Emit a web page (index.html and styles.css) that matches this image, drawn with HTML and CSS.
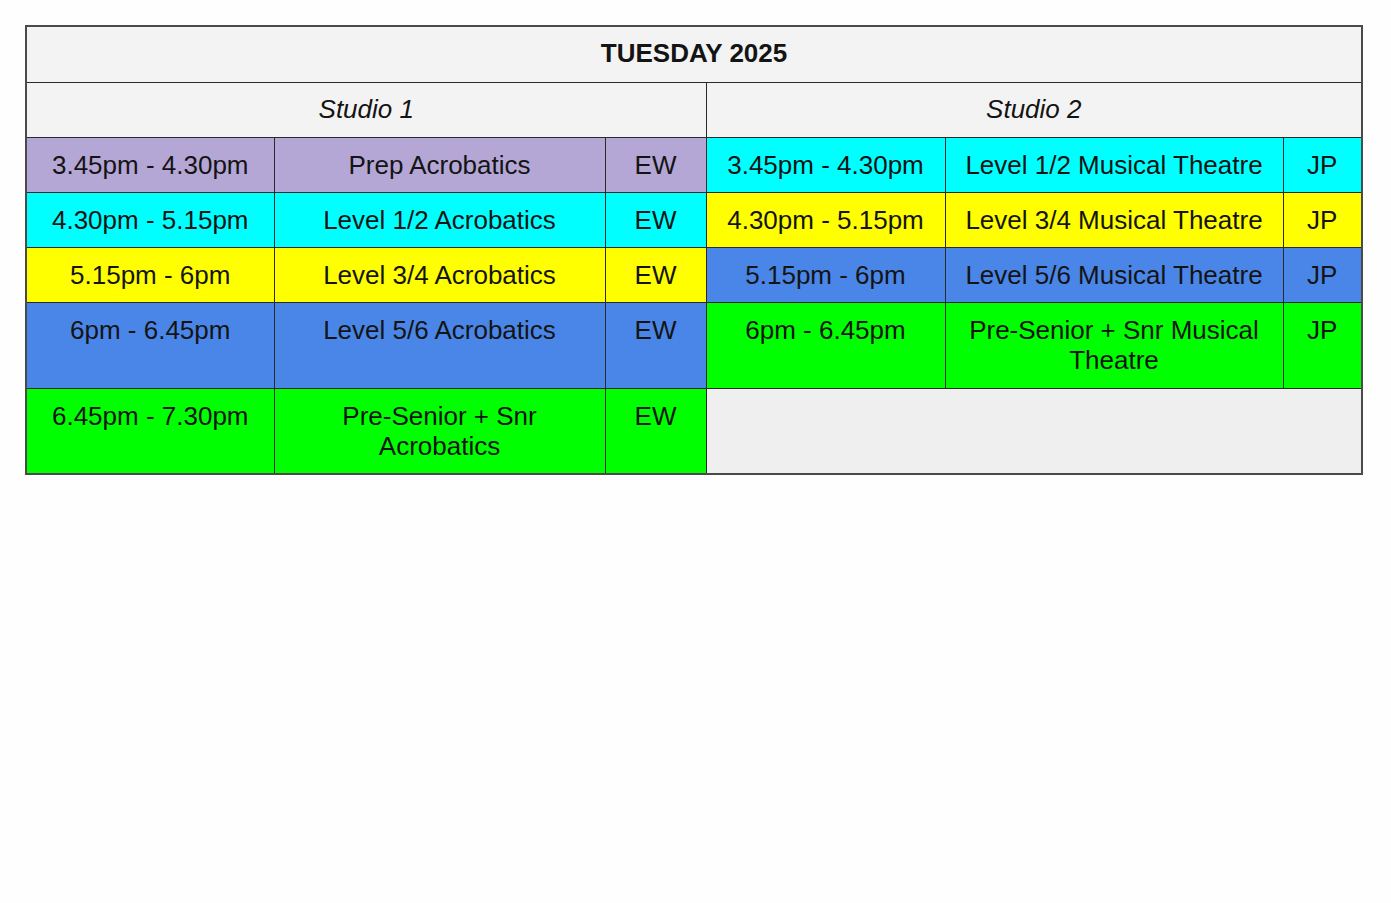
FILE: index.html
```html
<!DOCTYPE html>
<html>
<head>
<meta charset="utf-8">
<link rel="stylesheet" href="styles.css">
</head>
<body>
<table class="schedule">
  <colgroup>
    <col class="c-time1"><col class="c-class1"><col class="c-tutor1">
    <col class="c-time2"><col class="c-class2"><col class="c-tutor2">
  </colgroup>
  <tr class="r-title"><th colspan="6" class="title">TUESDAY 2025</th></tr>
  <tr class="r-studio"><th colspan="3" class="studio">Studio 1</th><th colspan="3" class="studio">Studio 2</th></tr>
  <tr class="r-std">
    <td class="lav">3.45pm - 4.30pm</td><td class="lav">Prep Acrobatics</td><td class="lav">EW</td>
    <td class="cyan">3.45pm - 4.30pm</td><td class="cyan">Level 1/2 Musical Theatre</td><td class="cyan">JP</td>
  </tr>
  <tr class="r-std">
    <td class="cyan">4.30pm - 5.15pm</td><td class="cyan">Level 1/2 Acrobatics</td><td class="cyan">EW</td>
    <td class="yel">4.30pm - 5.15pm</td><td class="yel">Level 3/4 Musical Theatre</td><td class="yel">JP</td>
  </tr>
  <tr class="r-std">
    <td class="yel">5.15pm - 6pm</td><td class="yel">Level 3/4 Acrobatics</td><td class="yel">EW</td>
    <td class="blue">5.15pm - 6pm</td><td class="blue">Level 5/6 Musical Theatre</td><td class="blue">JP</td>
  </tr>
  <tr class="r-tall">
    <td class="blue">6pm - 6.45pm</td><td class="blue">Level 5/6 Acrobatics</td><td class="blue">EW</td>
    <td class="green">6pm - 6.45pm</td><td class="green">Pre-Senior + Snr Musical Theatre</td><td class="green">JP</td>
  </tr>
  <tr class="r-tall">
    <td class="green">6.45pm - 7.30pm</td><td class="green">Pre-Senior + Snr<br>Acrobatics</td><td class="green">EW</td>
    <td colspan="3" class="empty"></td>
  </tr>
</table>
</body>
</html>
```
FILE: styles.css
```css
html, body {
  margin: 0;
  padding: 0;
  background: #fefefe;
}
body {
  padding: 25px 0 0 25px;
  font-family: "Liberation Sans", Arial, sans-serif;
  color: #141414;
}
.schedule {
  border-collapse: collapse;
  table-layout: fixed;
  width: 1336px;
  border: 2px solid #4a4a4a;
  font-size: 26px;
  line-height: 30px;
}
.c-time1 { width: 248px; }
.c-class1 { width: 331px; }
.c-tutor1 { width: 101px; }
.c-time2 { width: 239px; }
.c-class2 { width: 338px; }
.c-tutor2 { width: 79px; }
.schedule th, .schedule td {
  border: 1px solid #2a2a2a;
  padding: 12px 4px 0;
  text-align: center;
  vertical-align: top;
  box-sizing: border-box;
}
.r-title { height: 56px; }
.r-studio, .r-std { height: 55px; }
.r-tall { height: 86px; }
.schedule th {
  background: #f3f3f3;
  font-weight: normal;
  padding-top: 11px;
}
.schedule th.title {
  font-weight: bold;
}
.schedule th.studio {
  font-style: italic;
}
.lav { background: #b4a7d6; }
.cyan { background: #00ffff; }
.yel { background: #ffff00; }
.blue { background: #4a86e8; }
.green { background: #00ff00; }
.empty { background: #efefef; }
```
